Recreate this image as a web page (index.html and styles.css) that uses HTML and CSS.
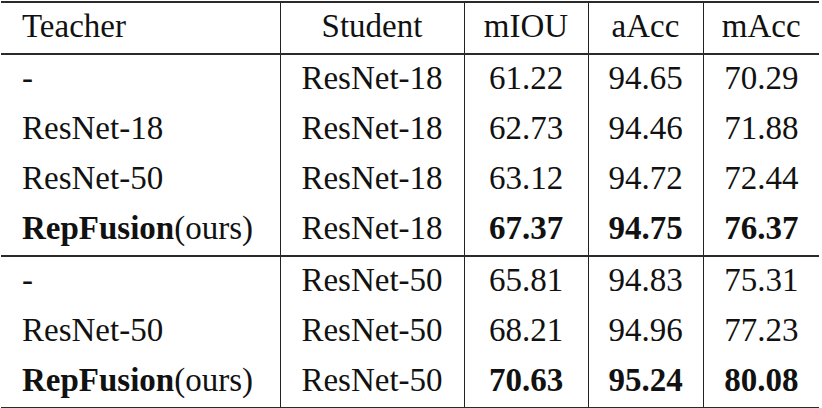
FILE: index.html
```html
<!DOCTYPE html>
<html lang="en">
<head>
  <meta charset="UTF-8">
  <title>RepFusion results</title>
  <link rel="stylesheet" href="styles.css">
</head>
<body>
  <table class="results">
    <colgroup>
      <col class="c-teacher">
      <col class="c-student">
      <col class="c-miou">
      <col class="c-aacc">
      <col class="c-macc">
    </colgroup>
    <thead>
      <tr>
        <th class="left">Teacher</th>
        <th>Student</th>
        <th>mIOU</th>
        <th>aAcc</th>
        <th>mAcc</th>
      </tr>
    </thead>
    <tbody>
      <tr>
        <td class="left">-</td>
        <td>ResNet-18</td>
        <td>61.22</td>
        <td>94.65</td>
        <td>70.29</td>
      </tr>
      <tr>
        <td class="left">ResNet-18</td>
        <td>ResNet-18</td>
        <td>62.73</td>
        <td>94.46</td>
        <td>71.88</td>
      </tr>
      <tr>
        <td class="left">ResNet-50</td>
        <td>ResNet-18</td>
        <td>63.12</td>
        <td>94.72</td>
        <td>72.44</td>
      </tr>
      <tr>
        <td class="left"><b>RepFusion</b>(ours)</td>
        <td>ResNet-18</td>
        <td><b>67.37</b></td>
        <td><b>94.75</b></td>
        <td><b>76.37</b></td>
      </tr>
    </tbody>
    <tbody class="group">
      <tr>
        <td class="left">-</td>
        <td>ResNet-50</td>
        <td>65.81</td>
        <td>94.83</td>
        <td>75.31</td>
      </tr>
      <tr>
        <td class="left">ResNet-50</td>
        <td>ResNet-50</td>
        <td>68.21</td>
        <td>94.96</td>
        <td>77.23</td>
      </tr>
      <tr>
        <td class="left"><b>RepFusion</b>(ours)</td>
        <td>ResNet-50</td>
        <td><b>70.63</b></td>
        <td><b>95.24</b></td>
        <td><b>80.08</b></td>
      </tr>
    </tbody>
  </table>
</body>
</html>
```

FILE: styles.css
```css
body {
  margin: 0;
  background: #fff;
  color: #111;
  font-family: "Liberation Serif", "Times New Roman", serif;
  padding: 1px 0 0 1px;
}
.results {
  border-collapse: collapse;
  table-layout: fixed;
  width: 818px;
  font-size: 33px;
  border-top: 2px solid #2a2a2a;
  border-bottom: 2px solid #2a2a2a;
}
.c-teacher { width: 279px; }
.c-student { width: 184px; }
.c-miou { width: 124px; }
.c-aacc { width: 115px; }
.c-macc { width: 116px; }
.results th,
.results td {
  height: 50px;
  padding: 0;
  text-align: center;
  vertical-align: top;
  font-weight: normal;
  line-height: 46px;
  border-left: 1px solid #222;
}
.results th:first-child,
.results td:first-child {
  border-left: none;
}
.results .left {
  text-align: left;
  padding-left: 21px;
}
.results thead tr {
  border-bottom: 2px solid #2a2a2a;
}
.results tbody.group {
  border-top: 2px solid #2a2a2a;
}
.results b {
  font-weight: bold;
}
```
